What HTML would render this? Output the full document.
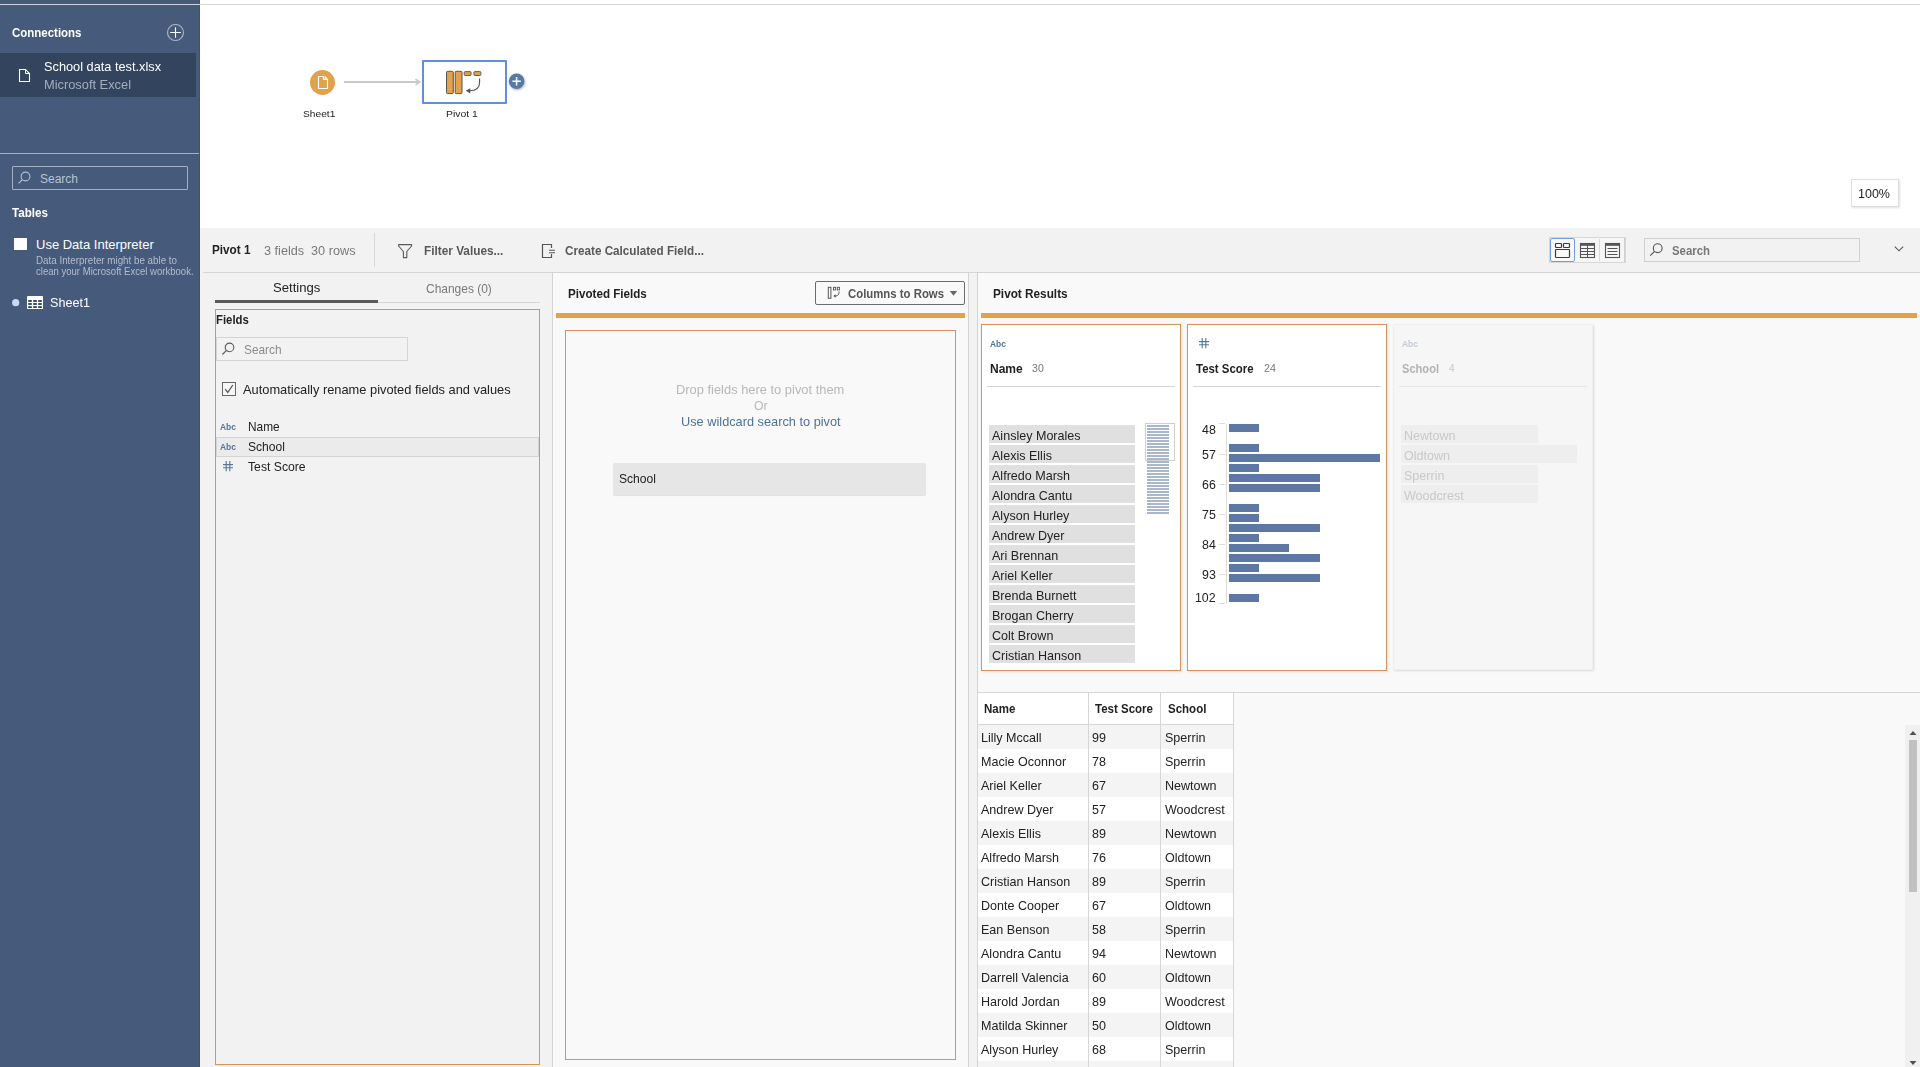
<!DOCTYPE html>
<html><head><meta charset="utf-8"><style>
html,body{margin:0;padding:0;width:1920px;height:1067px;overflow:hidden;background:#f9f9f9;}
body{position:relative;font-family:"Liberation Sans",sans-serif;}
.r{position:absolute;display:block;}
.t{position:absolute;white-space:nowrap;transform-origin:0 0;}
</style></head><body>
<div class="r" style="left:0px;top:0px;width:200px;height:1067px;background:#465a7b"></div>
<div class="r" style="left:199px;top:0px;width:1px;height:1067px;background:#3f5273"></div>
<div class="r" style="left:200px;top:0px;width:1720px;height:228px;background:#ffffff"></div>
<div class="r" style="left:200px;top:228px;width:1720px;height:44px;background:#f2f2f2"></div>
<div class="r" style="left:200px;top:272px;width:1720px;height:795px;background:#f2f2f2"></div>
<div class="r" style="left:203px;top:272px;width:1717px;height:1px;background:#d6d6d6"></div>
<div class="r" style="left:0px;top:4px;width:1920px;height:1px;background:#d2d2d2"></div>
<div class="r" style="left:552px;top:272px;width:417px;height:795px;background:#f9f9f9;border-left:1px solid #d3d3d3;border-right:1px solid #d3d3d3;border-top:1px solid #d3d3d3;box-sizing:border-box"></div>
<div class="r" style="left:977px;top:272px;width:943px;height:795px;background:#f9f9f9;border-left:1px solid #d3d3d3;border-top:1px solid #d3d3d3;box-sizing:border-box"></div>
<div class="t" style="left:12.00px;top:25px;font-size:13px;line-height:15px;color:#ffffff;font-weight:bold;transform:scaleX(0.8828);">Connections</div>
<svg class="r" style="left:166px;top:24px;" width="19" height="19" viewBox="0 0 19 19"><circle cx="9.5" cy="8.5" r="8" fill="none" stroke="#a6b1c2" stroke-width="1.2"/><path d="M9.5 3.3V13.7M4.2 8.5H14.8" stroke="#ffffff" stroke-width="1.1"/></svg>
<div class="r" style="left:0px;top:53px;width:196px;height:44px;background:#33445e"></div>
<svg class="r" style="left:18px;top:68px;" width="14" height="16" viewBox="0 0 14 16"><path d="M1.5 1.5H7.5L11.5 5.5V13.5H1.5Z" fill="none" stroke="#ffffff" stroke-width="1.1" stroke-linejoin="miter"/><path d="M7.5 1.5V5.5H11.5" fill="none" stroke="#ffffff" stroke-width="1"/></svg>
<div class="t" style="left:44.00px;top:59px;font-size:13px;line-height:15px;color:#ffffff;transform:scaleX(0.9814);">School data test.xlsx</div>
<div class="t" style="left:44.00px;top:77px;font-size:13px;line-height:15px;color:#a3adbd;transform:scaleX(0.9872);">Microsoft Excel</div>
<div class="r" style="left:0px;top:153px;width:199px;height:1px;background:#a3aebf"></div>
<div class="r" style="left:12px;top:166px;width:176px;height:24px;border:1px solid #a3aec0;box-sizing:border-box;border-radius:1px"></div>
<svg class="r" style="left:17px;top:171px;" width="16" height="16" viewBox="0 0 16 16"><circle cx="8.5" cy="5.5" r="4.4" fill="none" stroke="#b4bfce" stroke-width="1.1"/><path d="M5.4 8.6L1.6 12.4" stroke="#b4bfce" stroke-width="1.2"/></svg>
<div class="t" style="left:40.00px;top:172px;font-size:12px;line-height:14px;color:#b9c3d1;">Search</div>
<div class="t" style="left:12.00px;top:205px;font-size:13px;line-height:15px;color:#ffffff;font-weight:bold;transform:scaleX(0.8950);">Tables</div>
<div class="r" style="left:14px;top:238px;width:13px;height:12px;background:#ffffff"></div>
<div class="t" style="left:36.00px;top:237px;font-size:13px;line-height:15px;color:#ffffff;">Use Data Interpreter</div>
<div class="t" style="left:36.00px;top:255px;font-size:10px;line-height:11px;color:#b3bdcc;transform:scaleX(0.9794);">Data Interpreter might be able to</div>
<div class="t" style="left:36.00px;top:266px;font-size:10px;line-height:11px;color:#b3bdcc;transform:scaleX(0.9548);">clean your Microsoft Excel workbook.</div>
<svg class="r" style="left:11px;top:298px;" width="10" height="10" viewBox="0 0 10 10"><circle cx="4.7" cy="4.7" r="3.6" fill="#c9daf2"/></svg>
<svg class="r" style="left:27px;top:296px;" width="16" height="13" viewBox="0 0 16 13"><rect x="0" y="0" width="16" height="13" rx="0.6" fill="#ffffff"/><rect x="1.2" y="4.1" width="3.6" height="1.8" fill="#263c60"/><rect x="6.2" y="4.1" width="3.6" height="1.8" fill="#263c60"/><rect x="11.2" y="4.1" width="3.6" height="1.8" fill="#263c60"/><rect x="1.2" y="7.1" width="3.6" height="1.8" fill="#263c60"/><rect x="6.2" y="7.1" width="3.6" height="1.8" fill="#263c60"/><rect x="11.2" y="7.1" width="3.6" height="1.8" fill="#263c60"/><rect x="1.2" y="10.2" width="3.6" height="1.8" fill="#263c60"/><rect x="6.2" y="10.2" width="3.6" height="1.8" fill="#263c60"/><rect x="11.2" y="10.2" width="3.6" height="1.8" fill="#263c60"/></svg>
<div class="t" style="left:50.00px;top:295px;font-size:13px;line-height:15px;color:#ffffff;transform:scaleX(0.9709);">Sheet1</div>
<svg class="r" style="left:309px;top:69px;" width="27" height="27" viewBox="0 0 27 27"><circle cx="13.5" cy="13.5" r="12.5" fill="#e0a24c"/><path d="M9.5 7.5H14.5V10.5H18.5V19.5H9.5Z" fill="none" stroke="#ffffff" stroke-width="1.15" stroke-linejoin="miter"/><path d="M15.7 6.8L19.1 9.8H15.7Z" fill="#ffffff"/></svg>
<svg class="r" style="left:343px;top:77px;" width="80" height="10" viewBox="0 0 80 10"><path d="M1 5H75" stroke="#c9c9c9" stroke-width="2"/><path d="M72.5 2.2L76.8 5L72.5 7.8" fill="none" stroke="#c9c9c9" stroke-width="1.6" stroke-linejoin="round"/></svg>
<div class="r" style="left:422px;top:60px;width:85px;height:44px;border:2.5px solid #5e92d8;box-sizing:border-box;background:#fff;border-radius:1px"></div>
<svg class="r" style="left:444px;top:69px;" width="40" height="27" viewBox="0 0 40 27"><rect x="2.5" y="2.3" width="6.8" height="22.3" rx="1" fill="#e1a24b" stroke="#555" stroke-width="1"/><rect x="11.2" y="2.3" width="6.8" height="22.3" rx="1" fill="#e1a24b" stroke="#555" stroke-width="1"/><rect x="20.2" y="2.6" width="6.9" height="3.9" rx="1" fill="#e1a24b" stroke="#555" stroke-width="0.9"/><rect x="29.9" y="2.6" width="7" height="3.9" rx="1" fill="#e1a24b" stroke="#555" stroke-width="0.9"/><path d="M35.6 9.6V13.5C35.6 18.8 32 21.8 25.5 21.8" fill="none" stroke="#555" stroke-width="1.1"/><path d="M21.8 21.8L26.3 19.2L26.3 24.4Z" fill="#555"/></svg>
<svg class="r" style="left:506px;top:71px;" width="22" height="22" viewBox="0 0 22 22"><defs><filter id="sh" x="-30%" y="-30%" width="160%" height="160%"><feDropShadow dx="0.6" dy="0.8" stdDeviation="0.9" flood-opacity="0.35"/></filter></defs><circle cx="10.6" cy="10.2" r="7.8" fill="#577aa3" filter="url(#sh)"/><path d="M10.6 6V14.4M6.4 10.2H14.8" stroke="#ffffff" stroke-width="1.5"/></svg>
<div class="t" style="left:303.30px;top:107.9px;font-size:9.5px;line-height:11px;color:#222222;transform:scaleX(1.0729);">Sheet1</div>
<div class="t" style="left:446.30px;top:107.9px;font-size:9.5px;line-height:11px;color:#222222;transform:scaleX(1.0950);">Pivot 1</div>
<div class="r" style="left:1851px;top:179px;width:48px;height:28px;background:#fff;border:1px solid #dedede;box-sizing:border-box;box-shadow:1px 1px 2px rgba(0,0,0,0.12)"></div>
<div class="t" style="left:1858.00px;top:187px;font-size:12px;line-height:14px;color:#222222;transform:scaleX(1.0425);">100%</div>
<div class="t" style="left:212.40px;top:242px;font-size:13px;line-height:15px;color:#222222;font-weight:bold;transform:scaleX(0.9032);">Pivot 1</div>
<div class="t" style="left:263.80px;top:243.5px;font-size:12px;line-height:14px;color:#7a7a7a;transform:scaleX(1.0574);">3 fields</div>
<div class="t" style="left:311.40px;top:243.5px;font-size:12px;line-height:14px;color:#7a7a7a;transform:scaleX(1.0592);">30 rows</div>
<div class="r" style="left:374px;top:233px;width:1px;height:34px;background:#d8d8d8"></div>
<svg class="r" style="left:396px;top:242px;" width="18" height="18" viewBox="0 0 18 18"><path d="M2.6 2.6H15.6V4L10.8 9.5V15.6H7.4V9.5L2.6 4Z" fill="none" stroke="#5a5a5a" stroke-width="1.1" stroke-linejoin="round"/></svg>
<div class="t" style="left:423.90px;top:242.9px;font-size:13px;line-height:15px;color:#585858;font-weight:bold;transform:scaleX(0.9082);">Filter Values...</div>
<svg class="r" style="left:540px;top:242px;" width="17" height="18" viewBox="0 0 17 18"><path d="M8.5 2.5H2.5V15.5H8.5M8.5 2.5L11.5 2.5L11.5 6M11.5 12V15.5H8.5" fill="none" stroke="#555" stroke-width="1.2"/><path d="M9 8.2H15M9 10.8H15" stroke="#555" stroke-width="1.1"/></svg>
<div class="t" style="left:565.00px;top:242.9px;font-size:13px;line-height:15px;color:#585858;font-weight:bold;transform:scaleX(0.8990);">Create Calculated Field...</div>
<div class="r" style="left:1549px;top:237px;width:77px;height:26px;background:#f6f6f6;border:1px solid #d6d6d6;box-sizing:border-box"></div>
<div class="r" style="left:1550px;top:238px;width:25px;height:24px;border:1px solid #6f9ee0;box-sizing:border-box;background:#f9f9f9;border-radius:2px"></div>
<div class="r" style="left:1599px;top:239px;width:1px;height:22px;background:#d9d9d9"></div>
<div class="r" style="left:1624px;top:238px;width:1px;height:24px;background:#cfcfcf"></div>
<svg class="r" style="left:1554px;top:242px;" width="18" height="17" viewBox="0 0 18 17"><rect x="1.5" y="1.5" width="6" height="4" rx="0.8" fill="none" stroke="#3c3c3c" stroke-width="1.2"/><rect x="9.5" y="1.5" width="6" height="4" rx="0.8" fill="none" stroke="#3c3c3c" stroke-width="1.2"/><rect x="1.5" y="7.5" width="14" height="8" rx="0.8" fill="none" stroke="#3c3c3c" stroke-width="1.2"/></svg>
<svg class="r" style="left:1579px;top:242px;" width="18" height="17" viewBox="0 0 18 17"><rect x="1.5" y="1.5" width="14" height="14" fill="none" stroke="#555" stroke-width="1.1"/><rect x="1" y="1" width="15" height="2.8" fill="#555"/><path d="M1.5 6.5H15.5M1.5 9.5H15.5M1.5 12.5H15.5M8.5 3V15.5" stroke="#555" stroke-width="1"/></svg>
<svg class="r" style="left:1604px;top:242px;" width="18" height="17" viewBox="0 0 18 17"><rect x="1.5" y="1.5" width="14" height="14" fill="none" stroke="#555" stroke-width="1.1"/><rect x="1" y="1" width="15" height="2.8" fill="#555"/><path d="M3.5 6.5H13.5M3.5 9.5H13.5M3.5 12.5H13.5" stroke="#555" stroke-width="1"/></svg>
<div class="r" style="left:1644px;top:238px;width:216px;height:24px;border:1px solid #cfcfcf;box-sizing:border-box;background:#f2f2f2"></div>
<svg class="r" style="left:1648px;top:242px;" width="18" height="16" viewBox="0 0 18 16"><circle cx="9.7" cy="6.2" r="4.4" fill="none" stroke="#555" stroke-width="1.1"/><path d="M6.6 9.4L2.2 13.6" stroke="#555" stroke-width="1.2"/></svg>
<div class="t" style="left:1672.00px;top:243px;font-size:13px;line-height:15px;color:#777777;font-weight:bold;transform:scaleX(0.8765);">Search</div>
<svg class="r" style="left:1892px;top:244px;" width="14" height="10" viewBox="0 0 14 10"><path d="M2.8 2.6L7 6.8L11.2 2.6" fill="none" stroke="#555" stroke-width="1.1"/></svg>
<div class="t" style="left:272.60px;top:280px;font-size:13px;line-height:15px;color:#222222;transform:scaleX(1.0092);">Settings</div>
<div class="t" style="left:426.00px;top:280.8px;font-size:13px;line-height:15px;color:#7a7a7a;transform:scaleX(0.9198);">Changes (0)</div>
<div class="r" style="left:378px;top:302px;width:162px;height:1px;background:#d6d6d6"></div>
<div class="r" style="left:215px;top:300px;width:163px;height:3px;background:#5a5a5a"></div>
<div class="r" style="left:215px;top:309px;width:325px;height:756px;border:1px solid #d8935b;box-sizing:border-box"></div>
<div class="t" style="left:216.40px;top:311.8px;font-size:13px;line-height:15px;color:#222222;font-weight:bold;transform:scaleX(0.8730);">Fields</div>
<div class="r" style="left:216px;top:337px;width:192px;height:24px;border:1px solid #d4d4d4;box-sizing:border-box"></div>
<svg class="r" style="left:220px;top:341px;" width="17" height="17" viewBox="0 0 17 17"><circle cx="9.5" cy="6.4" r="4.3" fill="none" stroke="#5a5a5a" stroke-width="1.1"/><path d="M6.5 9.4L2.4 13.5" stroke="#5a5a5a" stroke-width="1.2"/></svg>
<div class="t" style="left:244.40px;top:342px;font-size:13px;line-height:15px;color:#8c8c8c;transform:scaleX(0.9130);">Search</div>
<div class="r" style="left:222px;top:382px;width:14px;height:14px;border:1px solid #666;box-sizing:border-box;background:#f6f6f6"></div>
<svg class="r" style="left:222px;top:382px;" width="14" height="14" viewBox="0 0 14 14"><path d="M3.2 7.2L5.8 10.5L10.8 3" fill="none" stroke="#555" stroke-width="1.3"/></svg>
<div class="t" style="left:242.60px;top:382px;font-size:13px;line-height:15px;color:#222222;transform:scaleX(0.9875);">Automatically rename pivoted fields and values</div>
<div class="r" style="left:216px;top:437px;width:323px;height:20px;background:#ebebeb;border:1px solid #d4d4d4;border-width:1.5px 1px 1.5px 1px;box-sizing:border-box"></div>
<div class="t" style="left:220.00px;top:420.8px;font-size:9.5px;line-height:11px;color:#56759a;font-weight:bold;transform:scaleX(0.8916);">Abc</div>
<div class="t" style="left:247.90px;top:419px;font-size:13px;line-height:15px;color:#222222;transform:scaleX(0.9111);">Name</div>
<div class="t" style="left:220.00px;top:441px;font-size:9.5px;line-height:11px;color:#56759a;font-weight:bold;transform:scaleX(0.8916);">Abc</div>
<div class="t" style="left:247.90px;top:439px;font-size:13px;line-height:15px;color:#222222;transform:scaleX(0.9307);">School</div>
<svg class="r" style="left:222px;top:460px;" width="12" height="12" viewBox="0 0 12 12"><path d="M4.2 1V11.2M7.8 1V11.2M1 4.6H11M1 7.8H11" stroke="#56779a" stroke-width="1.1"/></svg>
<div class="t" style="left:247.90px;top:459px;font-size:13px;line-height:15px;color:#222222;transform:scaleX(0.9379);">Test Score</div>
<div class="t" style="left:568.00px;top:286px;font-size:13px;line-height:15px;color:#222222;font-weight:bold;transform:scaleX(0.8942);">Pivoted Fields</div>
<div class="r" style="left:815px;top:281px;width:150px;height:24px;border:1px solid #6c6c6c;box-sizing:border-box;border-radius:2px"></div>
<svg class="r" style="left:826px;top:285px;" width="16" height="16" viewBox="0 0 16 16"><rect x="2.3" y="2.3" width="2.6" height="11" fill="none" stroke="#555" stroke-width="1"/><rect x="7.5" y="2.3" width="2.2" height="2.6" fill="none" stroke="#555" stroke-width="0.9"/><rect x="11.3" y="2.3" width="2.2" height="2.6" fill="none" stroke="#555" stroke-width="0.9"/><path d="M13 6.5C13.2 9.5 12 11 8.5 11" fill="none" stroke="#555" stroke-width="1"/><path d="M9.6 9.2L7.4 11L9.6 12.8Z" fill="#555"/></svg>
<div class="t" style="left:847.80px;top:286px;font-size:13px;line-height:15px;color:#555555;font-weight:bold;transform:scaleX(0.8745);">Columns to Rows</div>
<svg class="r" style="left:949px;top:290px;" width="9" height="7" viewBox="0 0 9 7"><path d="M0.8 1H8.2L4.5 5.8Z" fill="#666"/></svg>
<div class="r" style="left:556px;top:313px;width:409px;height:5px;background:#e1a24b"></div>
<div class="r" style="left:565px;top:330px;width:391px;height:730px;border:1px solid #d8935b;box-sizing:border-box"></div>
<div class="t" style="left:676.10px;top:381.9px;font-size:13px;line-height:15px;color:#b8b8b8;transform:scaleX(0.9911);">Drop fields here to pivot them</div>
<div class="t" style="left:753.70px;top:397.8px;font-size:13px;line-height:15px;color:#b8b8b8;transform:scaleX(0.9416);">Or</div>
<div class="t" style="left:680.90px;top:414.3px;font-size:13px;line-height:15px;color:#4f7298;transform:scaleX(0.9818);">Use wildcard search to pivot</div>
<div class="r" style="left:613px;top:463px;width:313px;height:32px;background:#e6e6e6;border-radius:2px;box-shadow:0 1px 1px rgba(0,0,0,0.10)"></div>
<div class="t" style="left:619.10px;top:470.5px;font-size:13px;line-height:15px;color:#222222;transform:scaleX(0.9307);">School</div>
<div class="t" style="left:992.70px;top:286.1px;font-size:13px;line-height:15px;color:#222222;font-weight:bold;transform:scaleX(0.9058);">Pivot Results</div>
<div class="r" style="left:981px;top:313px;width:936px;height:5px;background:#e1a24b"></div>
<div class="r" style="left:981px;top:324px;width:200px;height:347px;background:#fff;border:1px solid #d8935b;box-sizing:border-box;box-shadow:1px 1px 3px rgba(0,0,0,0.10)"></div>
<div class="t" style="left:990.00px;top:338px;font-size:9.5px;line-height:11px;color:#56759a;font-weight:bold;transform:scaleX(0.8916);">Abc</div>
<div class="t" style="left:990.00px;top:361px;font-size:13px;line-height:15px;color:#222222;font-weight:bold;transform:scaleX(0.9234);">Name</div>
<div class="t" style="left:1032.10px;top:362.3px;font-size:10.5px;line-height:12px;color:#777777;transform:scaleX(1.0106);">30</div>
<div class="r" style="left:987px;top:386px;width:188px;height:1px;background:#d6d6d6"></div>
<div class="r" style="left:989px;top:425px;width:146px;height:18px;background:#e0e0e0"></div>
<div class="t" style="left:992.00px;top:427.7px;font-size:13px;line-height:15px;color:#222222;transform:scaleX(0.9650);">Ainsley Morales</div>
<div class="r" style="left:989px;top:445px;width:146px;height:18px;background:#e0e0e0"></div>
<div class="t" style="left:992.00px;top:447.7px;font-size:13px;line-height:15px;color:#222222;transform:scaleX(0.9650);">Alexis Ellis</div>
<div class="r" style="left:989px;top:465px;width:146px;height:18px;background:#e0e0e0"></div>
<div class="t" style="left:992.00px;top:467.7px;font-size:13px;line-height:15px;color:#222222;transform:scaleX(0.9650);">Alfredo Marsh</div>
<div class="r" style="left:989px;top:485px;width:146px;height:18px;background:#e0e0e0"></div>
<div class="t" style="left:992.00px;top:487.7px;font-size:13px;line-height:15px;color:#222222;transform:scaleX(0.9650);">Alondra Cantu</div>
<div class="r" style="left:989px;top:505px;width:146px;height:18px;background:#e0e0e0"></div>
<div class="t" style="left:992.00px;top:507.70000000000005px;font-size:13px;line-height:15px;color:#222222;transform:scaleX(0.9650);">Alyson Hurley</div>
<div class="r" style="left:989px;top:525px;width:146px;height:18px;background:#e0e0e0"></div>
<div class="t" style="left:992.00px;top:527.7px;font-size:13px;line-height:15px;color:#222222;transform:scaleX(0.9650);">Andrew Dyer</div>
<div class="r" style="left:989px;top:545px;width:146px;height:18px;background:#e0e0e0"></div>
<div class="t" style="left:992.00px;top:547.7px;font-size:13px;line-height:15px;color:#222222;transform:scaleX(0.9650);">Ari Brennan</div>
<div class="r" style="left:989px;top:565px;width:146px;height:18px;background:#e0e0e0"></div>
<div class="t" style="left:992.00px;top:567.7px;font-size:13px;line-height:15px;color:#222222;transform:scaleX(0.9650);">Ariel Keller</div>
<div class="r" style="left:989px;top:585px;width:146px;height:18px;background:#e0e0e0"></div>
<div class="t" style="left:992.00px;top:587.7px;font-size:13px;line-height:15px;color:#222222;transform:scaleX(0.9650);">Brenda Burnett</div>
<div class="r" style="left:989px;top:605px;width:146px;height:18px;background:#e0e0e0"></div>
<div class="t" style="left:992.00px;top:607.7px;font-size:13px;line-height:15px;color:#222222;transform:scaleX(0.9650);">Brogan Cherry</div>
<div class="r" style="left:989px;top:625px;width:146px;height:18px;background:#e0e0e0"></div>
<div class="t" style="left:992.00px;top:627.7px;font-size:13px;line-height:15px;color:#222222;transform:scaleX(0.9650);">Colt Brown</div>
<div class="r" style="left:989px;top:645px;width:146px;height:18px;background:#e0e0e0"></div>
<div class="t" style="left:992.00px;top:647.7px;font-size:13px;line-height:15px;color:#222222;transform:scaleX(0.9650);">Cristian Hanson</div>
<svg class="r" style="left:1145px;top:423px;" width="30" height="95" viewBox="0 0 30 95"><rect x="2" y="2" width="22" height="2" fill="#a9b7cc"/><rect x="2" y="5" width="22" height="2" fill="#a9b7cc"/><rect x="2" y="8" width="22" height="2" fill="#a9b7cc"/><rect x="2" y="11" width="22" height="2" fill="#a9b7cc"/><rect x="2" y="14" width="22" height="2" fill="#a9b7cc"/><rect x="2" y="17" width="22" height="2" fill="#a9b7cc"/><rect x="2" y="20" width="22" height="2" fill="#a9b7cc"/><rect x="2" y="23" width="22" height="2" fill="#a9b7cc"/><rect x="2" y="26" width="22" height="2" fill="#a9b7cc"/><rect x="2" y="29" width="22" height="2" fill="#a9b7cc"/><rect x="2" y="32" width="22" height="2" fill="#a9b7cc"/><rect x="2" y="35" width="22" height="2" fill="#a9b7cc"/><rect x="2" y="38" width="22" height="2" fill="#a9b7cc"/><rect x="2" y="41" width="22" height="2" fill="#a9b7cc"/><rect x="2" y="44" width="22" height="2" fill="#a9b7cc"/><rect x="2" y="47" width="22" height="2" fill="#a9b7cc"/><rect x="2" y="50" width="22" height="2" fill="#a9b7cc"/><rect x="2" y="53" width="22" height="2" fill="#a9b7cc"/><rect x="2" y="56" width="22" height="2" fill="#a9b7cc"/><rect x="2" y="59" width="22" height="2" fill="#a9b7cc"/><rect x="2" y="62" width="22" height="2" fill="#a9b7cc"/><rect x="2" y="65" width="22" height="2" fill="#a9b7cc"/><rect x="2" y="68" width="22" height="2" fill="#a9b7cc"/><rect x="2" y="71" width="22" height="2" fill="#a9b7cc"/><rect x="2" y="74" width="22" height="2" fill="#a9b7cc"/><rect x="2" y="77" width="22" height="2" fill="#a9b7cc"/><rect x="2" y="80" width="22" height="2" fill="#a9b7cc"/><rect x="2" y="83" width="22" height="2" fill="#a9b7cc"/><rect x="2" y="86" width="22" height="2" fill="#a9b7cc"/><rect x="2" y="89" width="22" height="2" fill="#a9b7cc"/><rect x="0.5" y="0.5" width="29" height="37" fill="none" stroke="#cfcfcf" stroke-width="1"/></svg>
<div class="r" style="left:1187px;top:324px;width:200px;height:347px;background:#fff;border:1px solid #d8935b;box-sizing:border-box;box-shadow:1px 1px 3px rgba(0,0,0,0.10)"></div>
<svg class="r" style="left:1198px;top:337px;" width="12" height="12" viewBox="0 0 12 12"><path d="M4.2 1V11.2M7.8 1V11.2M1 4.6H11M1 7.8H11" stroke="#56779a" stroke-width="1.1"/></svg>
<div class="t" style="left:1196.20px;top:360.6px;font-size:13px;line-height:15px;color:#222222;font-weight:bold;transform:scaleX(0.8793);">Test Score</div>
<div class="t" style="left:1263.70px;top:362.3px;font-size:10.5px;line-height:12px;color:#777777;transform:scaleX(1.0106);">24</div>
<div class="r" style="left:1193px;top:386px;width:188px;height:1px;background:#d6d6d6"></div>
<div class="r" style="left:1226px;top:424px;width:1px;height:180px;background:#dcdcdc"></div>
<div class="r" style="left:1219px;top:423px;width:6px;height:1px;background:#dcdcdc"></div>
<div class="r" style="left:1219px;top:603px;width:6px;height:1px;background:#dcdcdc"></div>
<div class="r" style="left:1229px;top:424px;width:30px;height:8px;background:#5d78a5"></div>
<div class="r" style="left:1229px;top:444px;width:30px;height:8px;background:#5d78a5"></div>
<div class="r" style="left:1229px;top:454px;width:151px;height:8px;background:#5d78a5"></div>
<div class="r" style="left:1229px;top:464px;width:30px;height:8px;background:#5d78a5"></div>
<div class="r" style="left:1229px;top:474px;width:91px;height:8px;background:#5d78a5"></div>
<div class="r" style="left:1229px;top:484px;width:91px;height:8px;background:#5d78a5"></div>
<div class="r" style="left:1229px;top:504px;width:30px;height:8px;background:#5d78a5"></div>
<div class="r" style="left:1229px;top:514px;width:30px;height:8px;background:#5d78a5"></div>
<div class="r" style="left:1229px;top:524px;width:91px;height:8px;background:#5d78a5"></div>
<div class="r" style="left:1229px;top:534px;width:30px;height:8px;background:#5d78a5"></div>
<div class="r" style="left:1229px;top:544px;width:60px;height:8px;background:#5d78a5"></div>
<div class="r" style="left:1229px;top:554px;width:91px;height:8px;background:#5d78a5"></div>
<div class="r" style="left:1229px;top:564px;width:30px;height:8px;background:#5d78a5"></div>
<div class="r" style="left:1229px;top:574px;width:91px;height:8px;background:#5d78a5"></div>
<div class="r" style="left:1229px;top:594px;width:30px;height:8px;background:#5d78a5"></div>
<div class="r" style="left:1219px;top:454px;width:6px;height:1px;background:#dcdcdc"></div>
<div class="r" style="left:1219px;top:484px;width:6px;height:1px;background:#dcdcdc"></div>
<div class="r" style="left:1219px;top:514px;width:6px;height:1px;background:#dcdcdc"></div>
<div class="r" style="left:1219px;top:544px;width:6px;height:1px;background:#dcdcdc"></div>
<div class="r" style="left:1219px;top:574px;width:6px;height:1px;background:#dcdcdc"></div>
<div class="t" style="left:1201.80px;top:421.8px;font-size:12.8px;line-height:15px;color:#222222;transform:scaleX(0.9695);">48</div>
<div class="t" style="left:1201.80px;top:447px;font-size:12.8px;line-height:15px;color:#222222;transform:scaleX(0.9695);">57</div>
<div class="t" style="left:1201.80px;top:477.2px;font-size:12.8px;line-height:15px;color:#222222;transform:scaleX(0.9695);">66</div>
<div class="t" style="left:1201.80px;top:507.29999999999995px;font-size:12.8px;line-height:15px;color:#222222;transform:scaleX(0.9695);">75</div>
<div class="t" style="left:1201.80px;top:537.1px;font-size:12.8px;line-height:15px;color:#222222;transform:scaleX(0.9695);">84</div>
<div class="t" style="left:1201.80px;top:567.2px;font-size:12.8px;line-height:15px;color:#222222;transform:scaleX(0.9695);">93</div>
<div class="t" style="left:1195.00px;top:590px;font-size:12.8px;line-height:15px;color:#222222;transform:scaleX(0.9649);">102</div>
<div class="r" style="left:1393px;top:324px;width:200px;height:346px;background:#f6f6f6;border:1px solid #efefef;box-sizing:border-box;box-shadow:1px 1px 2px rgba(0,0,0,0.12)"></div>
<div class="t" style="left:1402.00px;top:337.6px;font-size:9.5px;line-height:11px;color:#c5cbd4;font-weight:bold;transform:scaleX(0.8916);">Abc</div>
<div class="t" style="left:1402.00px;top:360.9px;font-size:13px;line-height:15px;color:#b3b3b3;font-weight:bold;transform:scaleX(0.8537);">School</div>
<div class="t" style="left:1448.70px;top:362.3px;font-size:10.5px;line-height:12px;color:#c8c8c8;transform:scaleX(0.9650);">4</div>
<div class="r" style="left:1399px;top:386px;width:188px;height:1px;background:#e6e6e6"></div>
<div class="r" style="left:1401px;top:425px;width:137px;height:18px;background:#eeeeee"></div>
<div class="t" style="left:1404.00px;top:427.7px;font-size:13px;line-height:15px;color:#c8c8c8;transform:scaleX(0.9650);">Newtown</div>
<div class="r" style="left:1401px;top:445px;width:176px;height:18px;background:#eeeeee"></div>
<div class="t" style="left:1404.00px;top:447.7px;font-size:13px;line-height:15px;color:#c8c8c8;transform:scaleX(0.9650);">Oldtown</div>
<div class="r" style="left:1401px;top:465px;width:137px;height:18px;background:#eeeeee"></div>
<div class="t" style="left:1404.00px;top:467.7px;font-size:13px;line-height:15px;color:#c8c8c8;transform:scaleX(0.9650);">Sperrin</div>
<div class="r" style="left:1401px;top:485px;width:137px;height:18px;background:#eeeeee"></div>
<div class="t" style="left:1404.00px;top:487.7px;font-size:13px;line-height:15px;color:#c8c8c8;transform:scaleX(0.9650);">Woodcrest</div>
<div class="r" style="left:978px;top:692px;width:942px;height:1px;background:#d6d6d6"></div>
<div class="r" style="left:978px;top:693px;width:255px;height:32px;background:#ffffff"></div>
<div class="r" style="left:978px;top:725px;width:255px;height:24px;background:#f4f4f4"></div>
<div class="t" style="left:981.40px;top:729.8px;font-size:13px;line-height:15px;color:#222222;transform:scaleX(0.9650);">Lilly Mccall</div>
<div class="t" style="left:1091.70px;top:729.8px;font-size:13px;line-height:15px;color:#222222;transform:scaleX(0.9650);">99</div>
<div class="t" style="left:1164.70px;top:729.8px;font-size:13px;line-height:15px;color:#222222;transform:scaleX(0.9650);">Sperrin</div>
<div class="r" style="left:978px;top:749px;width:255px;height:24px;background:#ffffff"></div>
<div class="t" style="left:981.40px;top:753.8px;font-size:13px;line-height:15px;color:#222222;transform:scaleX(0.9650);">Macie Oconnor</div>
<div class="t" style="left:1091.70px;top:753.8px;font-size:13px;line-height:15px;color:#222222;transform:scaleX(0.9650);">78</div>
<div class="t" style="left:1164.70px;top:753.8px;font-size:13px;line-height:15px;color:#222222;transform:scaleX(0.9650);">Sperrin</div>
<div class="r" style="left:978px;top:773px;width:255px;height:24px;background:#f4f4f4"></div>
<div class="t" style="left:981.40px;top:777.8px;font-size:13px;line-height:15px;color:#222222;transform:scaleX(0.9650);">Ariel Keller</div>
<div class="t" style="left:1091.70px;top:777.8px;font-size:13px;line-height:15px;color:#222222;transform:scaleX(0.9650);">67</div>
<div class="t" style="left:1164.70px;top:777.8px;font-size:13px;line-height:15px;color:#222222;transform:scaleX(0.9650);">Newtown</div>
<div class="r" style="left:978px;top:797px;width:255px;height:24px;background:#ffffff"></div>
<div class="t" style="left:981.40px;top:801.8px;font-size:13px;line-height:15px;color:#222222;transform:scaleX(0.9650);">Andrew Dyer</div>
<div class="t" style="left:1091.70px;top:801.8px;font-size:13px;line-height:15px;color:#222222;transform:scaleX(0.9650);">57</div>
<div class="t" style="left:1164.70px;top:801.8px;font-size:13px;line-height:15px;color:#222222;transform:scaleX(0.9650);">Woodcrest</div>
<div class="r" style="left:978px;top:821px;width:255px;height:24px;background:#f4f4f4"></div>
<div class="t" style="left:981.40px;top:825.8px;font-size:13px;line-height:15px;color:#222222;transform:scaleX(0.9650);">Alexis Ellis</div>
<div class="t" style="left:1091.70px;top:825.8px;font-size:13px;line-height:15px;color:#222222;transform:scaleX(0.9650);">89</div>
<div class="t" style="left:1164.70px;top:825.8px;font-size:13px;line-height:15px;color:#222222;transform:scaleX(0.9650);">Newtown</div>
<div class="r" style="left:978px;top:845px;width:255px;height:24px;background:#ffffff"></div>
<div class="t" style="left:981.40px;top:849.8px;font-size:13px;line-height:15px;color:#222222;transform:scaleX(0.9650);">Alfredo Marsh</div>
<div class="t" style="left:1091.70px;top:849.8px;font-size:13px;line-height:15px;color:#222222;transform:scaleX(0.9650);">76</div>
<div class="t" style="left:1164.70px;top:849.8px;font-size:13px;line-height:15px;color:#222222;transform:scaleX(0.9650);">Oldtown</div>
<div class="r" style="left:978px;top:869px;width:255px;height:24px;background:#f4f4f4"></div>
<div class="t" style="left:981.40px;top:873.8px;font-size:13px;line-height:15px;color:#222222;transform:scaleX(0.9650);">Cristian Hanson</div>
<div class="t" style="left:1091.70px;top:873.8px;font-size:13px;line-height:15px;color:#222222;transform:scaleX(0.9650);">89</div>
<div class="t" style="left:1164.70px;top:873.8px;font-size:13px;line-height:15px;color:#222222;transform:scaleX(0.9650);">Sperrin</div>
<div class="r" style="left:978px;top:893px;width:255px;height:24px;background:#ffffff"></div>
<div class="t" style="left:981.40px;top:897.8px;font-size:13px;line-height:15px;color:#222222;transform:scaleX(0.9650);">Donte Cooper</div>
<div class="t" style="left:1091.70px;top:897.8px;font-size:13px;line-height:15px;color:#222222;transform:scaleX(0.9650);">67</div>
<div class="t" style="left:1164.70px;top:897.8px;font-size:13px;line-height:15px;color:#222222;transform:scaleX(0.9650);">Oldtown</div>
<div class="r" style="left:978px;top:917px;width:255px;height:24px;background:#f4f4f4"></div>
<div class="t" style="left:981.40px;top:921.8px;font-size:13px;line-height:15px;color:#222222;transform:scaleX(0.9650);">Ean Benson</div>
<div class="t" style="left:1091.70px;top:921.8px;font-size:13px;line-height:15px;color:#222222;transform:scaleX(0.9650);">58</div>
<div class="t" style="left:1164.70px;top:921.8px;font-size:13px;line-height:15px;color:#222222;transform:scaleX(0.9650);">Sperrin</div>
<div class="r" style="left:978px;top:941px;width:255px;height:24px;background:#ffffff"></div>
<div class="t" style="left:981.40px;top:945.8px;font-size:13px;line-height:15px;color:#222222;transform:scaleX(0.9650);">Alondra Cantu</div>
<div class="t" style="left:1091.70px;top:945.8px;font-size:13px;line-height:15px;color:#222222;transform:scaleX(0.9650);">94</div>
<div class="t" style="left:1164.70px;top:945.8px;font-size:13px;line-height:15px;color:#222222;transform:scaleX(0.9650);">Newtown</div>
<div class="r" style="left:978px;top:965px;width:255px;height:24px;background:#f4f4f4"></div>
<div class="t" style="left:981.40px;top:969.8px;font-size:13px;line-height:15px;color:#222222;transform:scaleX(0.9650);">Darrell Valencia</div>
<div class="t" style="left:1091.70px;top:969.8px;font-size:13px;line-height:15px;color:#222222;transform:scaleX(0.9650);">60</div>
<div class="t" style="left:1164.70px;top:969.8px;font-size:13px;line-height:15px;color:#222222;transform:scaleX(0.9650);">Oldtown</div>
<div class="r" style="left:978px;top:989px;width:255px;height:24px;background:#ffffff"></div>
<div class="t" style="left:981.40px;top:993.8px;font-size:13px;line-height:15px;color:#222222;transform:scaleX(0.9650);">Harold Jordan</div>
<div class="t" style="left:1091.70px;top:993.8px;font-size:13px;line-height:15px;color:#222222;transform:scaleX(0.9650);">89</div>
<div class="t" style="left:1164.70px;top:993.8px;font-size:13px;line-height:15px;color:#222222;transform:scaleX(0.9650);">Woodcrest</div>
<div class="r" style="left:978px;top:1013px;width:255px;height:24px;background:#f4f4f4"></div>
<div class="t" style="left:981.40px;top:1017.8px;font-size:13px;line-height:15px;color:#222222;transform:scaleX(0.9650);">Matilda Skinner</div>
<div class="t" style="left:1091.70px;top:1017.8px;font-size:13px;line-height:15px;color:#222222;transform:scaleX(0.9650);">50</div>
<div class="t" style="left:1164.70px;top:1017.8px;font-size:13px;line-height:15px;color:#222222;transform:scaleX(0.9650);">Oldtown</div>
<div class="r" style="left:978px;top:1037px;width:255px;height:24px;background:#ffffff"></div>
<div class="t" style="left:981.40px;top:1041.8px;font-size:13px;line-height:15px;color:#222222;transform:scaleX(0.9650);">Alyson Hurley</div>
<div class="t" style="left:1091.70px;top:1041.8px;font-size:13px;line-height:15px;color:#222222;transform:scaleX(0.9650);">68</div>
<div class="t" style="left:1164.70px;top:1041.8px;font-size:13px;line-height:15px;color:#222222;transform:scaleX(0.9650);">Sperrin</div>
<div class="r" style="left:978px;top:1061px;width:255px;height:24px;background:#f4f4f4"></div>
<div class="t" style="left:981.40px;top:1065.8px;font-size:13px;line-height:15px;color:#222222;transform:scaleX(0.9650);">Brenda Burnett</div>
<div class="t" style="left:1091.70px;top:1065.8px;font-size:13px;line-height:15px;color:#222222;transform:scaleX(0.9650);">70</div>
<div class="t" style="left:1164.70px;top:1065.8px;font-size:13px;line-height:15px;color:#222222;transform:scaleX(0.9650);">Newtown</div>
<div class="r" style="left:978px;top:724px;width:255px;height:1px;background:#d6d6d6"></div>
<div class="r" style="left:1088px;top:693px;width:1px;height:374px;background:#d6d6d6"></div>
<div class="r" style="left:1160px;top:693px;width:1px;height:374px;background:#d6d6d6"></div>
<div class="r" style="left:1233px;top:693px;width:1px;height:374px;background:#d6d6d6"></div>
<div class="r" style="left:977px;top:693px;width:1px;height:374px;background:#d6d6d6"></div>
<div class="t" style="left:984.20px;top:700.8px;font-size:13px;line-height:15px;color:#222222;font-weight:bold;transform:scaleX(0.8850);">Name</div>
<div class="t" style="left:1095.20px;top:700.8px;font-size:13px;line-height:15px;color:#222222;font-weight:bold;transform:scaleX(0.8850);">Test Score</div>
<div class="t" style="left:1167.80px;top:700.8px;font-size:13px;line-height:15px;color:#222222;font-weight:bold;transform:scaleX(0.8850);">School</div>
<div class="r" style="left:1905px;top:725px;width:15px;height:342px;background:#f0f0f0"></div>
<div class="r" style="left:1909px;top:740px;width:8px;height:152px;background:#c1c1c1"></div>
<svg class="r" style="left:1908px;top:729px;" width="10" height="8" viewBox="0 0 10 8"><path d="M1.5 6H8.5L5 2Z" fill="#505050"/></svg>
<svg class="r" style="left:1908px;top:1059px;" width="10" height="8" viewBox="0 0 10 8"><path d="M1.5 2H8.5L5 6Z" fill="#505050"/></svg>
</body></html>
